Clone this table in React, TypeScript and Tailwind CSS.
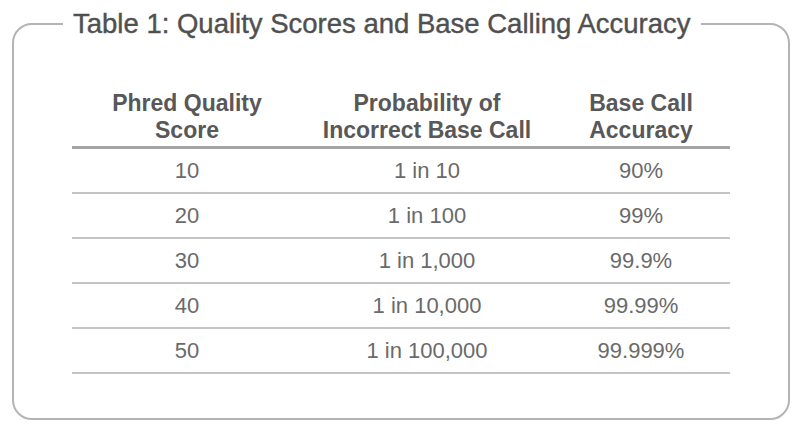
const rows = [
  { score: '10', prob: '1 in 10', acc: '90%' },
  { score: '20', prob: '1 in 100', acc: '99%' },
  { score: '30', prob: '1 in 1,000', acc: '99.9%' },
  { score: '40', prob: '1 in 10,000', acc: '99.99%' },
  { score: '50', prob: '1 in 100,000', acc: '99.999%' },
];

const App = () => {
  return (
    <div className="w-[800px] h-[424px] bg-white overflow-hidden font-['Liberation_Sans',Arial,sans-serif]">
      <fieldset className="mt-[8px] ml-[12px] w-[778px] border-2 border-[#b4b4b4] rounded-[20px] pb-[44px]">
        <legend className="ml-[49px] px-[10px] text-[27.5px] leading-[32px] text-[#505050] [-webkit-text-stroke:0.4px_#505050]">
          Table 1: Quality Scores and Base Calling Accuracy
        </legend>
        {/* Table */}
        <table className="mt-[50px] ml-[58px] w-[658px] border-collapse">
          <thead>
            <tr className="border-b-[3px] border-[#a4a4a4]">
              <th className="w-[230px] pb-[2px] text-[23px] leading-[27px] font-bold text-[#585858]">
                Phred Quality
                <br />
                Score
              </th>
              <th className="w-[250px] pb-[2px] text-[23px] leading-[27px] font-bold text-[#585858]">
                Probability of
                <br />
                Incorrect Base Call
              </th>
              <th className="pb-[2px] text-[23px] leading-[27px] font-bold text-[#585858]">
                Base Call
                <br />
                Accuracy
              </th>
            </tr>
          </thead>
          <tbody>
            {rows.map((r) => (
              <tr key={r.score} className="border-b-2 border-[#c4c4c4]">
                <td className="h-[45px] text-center text-[22px] text-[#6a6a6a]">{r.score}</td>
                <td className="h-[45px] text-center text-[22px] text-[#6a6a6a]">{r.prob}</td>
                <td className="h-[45px] text-center text-[22px] text-[#6a6a6a]">{r.acc}</td>
              </tr>
            ))}
          </tbody>
        </table>
      </fieldset>
    </div>
  );
};

export default App;
